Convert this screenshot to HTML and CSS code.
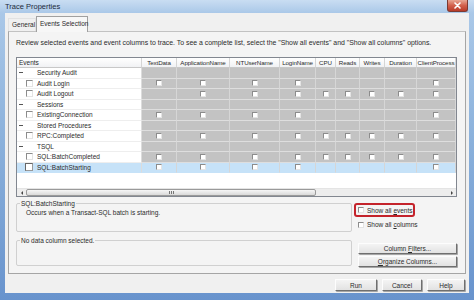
FILE: index.html
```html
<!DOCTYPE html>
<html lang="en">
<head>
  <meta charset="UTF-8" />
  <title>Trace Properties</title>
  <link rel="stylesheet" href="styles.css">
</head>
<body>
  <div class="window">
    <div class="titlebar">
      <span class="title">Trace Properties</span>
      <span class="close">
        <svg width="9" height="7" viewBox="0 0 9 7"><path d="M2 1 L7 6 M7 1 L2 6" stroke="#fff" stroke-width="1.6" stroke-linecap="round"/></svg>
      </span>
    </div>

    <div class="client">
      <div class="tabs">
        <span class="tab">General</span>
        <span class="tab active">Events Selection</span>
      </div>

      <div class="panel">
        <p class="desc">Review selected events and event columns to trace. To see a complete list, select the "Show all events" and "Show all columns" options.</p>

        <div class="grid">
          <div class="row head">
            <span class="ev">Events</span>
            <span class="h">TextData</span>
            <span class="h">ApplicationName</span>
            <span class="h">NTUserName</span>
            <span class="h">LoginName</span>
            <span class="h">CPU</span>
            <span class="h">Reads</span>
            <span class="h">Writes</span>
            <span class="h">Duration</span>
            <span class="h">ClientProcess</span>
          </div>

          <div class="row">
            <span class="ev cat"><span class="minus"></span>Security Audit</span>
            <span class="c"></span><span class="c"></span><span class="c"></span><span class="c"></span><span class="c"></span><span class="c"></span><span class="c"></span><span class="c"></span><span class="c"></span>
          </div>
          <div class="row">
            <span class="ev"><span class="cb"></span>Audit Login</span>
            <span class="c"><i class="cb"></i></span><span class="c"><i class="cb"></i></span><span class="c"><i class="cb"></i></span><span class="c"><i class="cb"></i></span><span class="c"></span><span class="c"></span><span class="c"></span><span class="c"></span><span class="c"><i class="cb"></i></span>
          </div>
          <div class="row">
            <span class="ev"><span class="cb"></span>Audit Logout</span>
            <span class="c"></span><span class="c"><i class="cb"></i></span><span class="c"><i class="cb"></i></span><span class="c"><i class="cb"></i></span><span class="c"><i class="cb"></i></span><span class="c"><i class="cb"></i></span><span class="c"><i class="cb"></i></span><span class="c"><i class="cb"></i></span><span class="c"><i class="cb"></i></span>
          </div>
          <div class="row">
            <span class="ev cat"><span class="minus"></span>Sessions</span>
            <span class="c"></span><span class="c"></span><span class="c"></span><span class="c"></span><span class="c"></span><span class="c"></span><span class="c"></span><span class="c"></span><span class="c"></span>
          </div>
          <div class="row">
            <span class="ev"><span class="cb"></span>ExistingConnection</span>
            <span class="c"><i class="cb"></i></span><span class="c"><i class="cb"></i></span><span class="c"><i class="cb"></i></span><span class="c"><i class="cb"></i></span><span class="c"></span><span class="c"></span><span class="c"></span><span class="c"></span><span class="c"><i class="cb"></i></span>
          </div>
          <div class="row">
            <span class="ev cat"><span class="minus"></span>Stored Procedures</span>
            <span class="c"></span><span class="c"></span><span class="c"></span><span class="c"></span><span class="c"></span><span class="c"></span><span class="c"></span><span class="c"></span><span class="c"></span>
          </div>
          <div class="row">
            <span class="ev"><span class="cb"></span>RPC:Completed</span>
            <span class="c"><i class="cb"></i></span><span class="c"><i class="cb"></i></span><span class="c"><i class="cb"></i></span><span class="c"><i class="cb"></i></span><span class="c"><i class="cb"></i></span><span class="c"><i class="cb"></i></span><span class="c"><i class="cb"></i></span><span class="c"><i class="cb"></i></span><span class="c"><i class="cb"></i></span>
          </div>
          <div class="row">
            <span class="ev cat"><span class="minus"></span>TSQL</span>
            <span class="c"></span><span class="c"></span><span class="c"></span><span class="c"></span><span class="c"></span><span class="c"></span><span class="c"></span><span class="c"></span><span class="c"></span>
          </div>
          <div class="row">
            <span class="ev"><span class="cb"></span>SQL:BatchCompleted</span>
            <span class="c"><i class="cb"></i></span><span class="c"><i class="cb"></i></span><span class="c"><i class="cb"></i></span><span class="c"><i class="cb"></i></span><span class="c"><i class="cb"></i></span><span class="c"><i class="cb"></i></span><span class="c"><i class="cb"></i></span><span class="c"><i class="cb"></i></span><span class="c"><i class="cb"></i></span>
          </div>
          <div class="row sel">
            <span class="ev"><span class="cb big"></span>SQL:BatchStarting</span>
            <span class="c"><i class="cb"></i></span><span class="c"><i class="cb"></i></span><span class="c"><i class="cb"></i></span><span class="c"><i class="cb"></i></span><span class="c"></span><span class="c"></span><span class="c"></span><span class="c"></span><span class="c"><i class="cb"></i></span>
          </div>

          <div class="filler"></div>

          <div class="hscroll">
            <span class="arrow left"></span>
            <div class="track">
              <div class="thumb"><span class="grip"></span></div>
            </div>
            <span class="arrow right"></span>
          </div>
        </div>

        <div class="lower">
          <div class="boxes">
            <fieldset class="group first">
              <legend>SQL:BatchStarting</legend>
              <p>Occurs when a Transact-SQL batch is starting.</p>
            </fieldset>
            <fieldset class="group second">
              <legend>No data column selected.</legend>
            </fieldset>
          </div>

          <div class="side">
            <label class="opt marked"><span class="cb"></span><span>Show all <u>e</u>vents</span></label>
            <label class="opt"><span class="cb"></span><span>Show all <u>c</u>olumns</span></label>
            <button class="wide">Column <u>F</u>ilters...</button>
            <button class="wide"><u>O</u>rganize Columns...</button>
          </div>
        </div>
      </div>

      <div class="footer">
        <button class="run">Run</button>
        <button class="cancel">Cancel</button>
        <button class="help">Help</button>
      </div>
    </div>
  </div>
</body>
</html>
```

FILE: styles.css
```css
body {
  margin: 0;
  font-family: "Liberation Sans", Arial, sans-serif;
  font-size: 6.5px;
  color: #2b2b2b;
}
.window {
  width: 474px;
  height: 300px;
  display: flex;
  flex-direction: column;
  background: linear-gradient(to bottom, #c9ddf2 0, #aac8e8 13px, #8cb2dc 45%, #6893cd 100%);
}
.titlebar {
  height: 13px;
  display: flex;
  align-items: center;
  padding-left: 5px;
}
.title {
  font-size: 7.5px;
  color: #1c2a3c;
}
.close {
  margin-left: auto;
  margin-right: 6px;
  align-self: flex-start;
  width: 21px;
  height: 12px;
  display: flex;
  align-items: center;
  justify-content: center;
  border: 1px solid #7b3a33;
  border-top: none;
  border-radius: 0 0 3px 3px;
  box-sizing: border-box;
  background: linear-gradient(to bottom, #e8a693 0, #d2604c 50%, #b83a28 100%);
}
.client {
  flex: 1;
  margin: 0 5px 7px 5px;
  background: #f0f0f0;
  display: flex;
  flex-direction: column;
}
.tabs {
  height: 18px;
  display: flex;
  align-items: flex-end;
  padding-left: 3px;
}
.tab {
  height: 13px;
  line-height: 12px;
  padding: 0 3px;
  box-sizing: border-box;
  border: 1px solid #e2e2e2;
  border-bottom: none;
  width: 28px;
  white-space: nowrap;
}
.tab.active {
  width: 52px;
  height: 16px;
  line-height: 14px;
  background: #f7f7f7;
  border-color: #a0a0a0;
  margin-bottom: -1px;
  position: relative;
  z-index: 1;
}
.panel {
  width: 458px;
  height: 243px;
  margin-left: 3px;
  box-sizing: border-box;
  border: 1px solid #a5a5a5;
  border-top-color: #c2c2c2;
  background: #f4f4f4;
  padding: 6px 0 0 7px;
}
.desc {
  margin: 0;
  height: 10px;
  line-height: 10px;
  font-size: 6.9px;
  white-space: nowrap;
}
.grid {
  margin-top: 9px;
  width: 441px;
  height: 140px;
  box-sizing: border-box;
  border: 1px solid #828790;
  background: #fff;
  display: flex;
  flex-direction: column;
}
.row {
  display: grid;
  grid-template-columns: 125px 35px 53px 50px 36px 20px 24px 25px 32px 39px;
  height: 10.5px;
}
.row.head {
  height: 10px;
}
.row.head span {
  box-sizing: border-box;
  border-right: 1px solid #d5d5d5;
  border-bottom: 1px solid #c8c8c8;
  background: linear-gradient(to bottom, #ffffff, #f1f2f4);
  line-height: 9px;
  white-space: nowrap;
  overflow: hidden;
}
.row.head .ev {
  padding-left: 2px;
}
.row.head .h {
  text-align: center;
  font-size: 6.2px;
  letter-spacing: -0.1px;
}
.ev {
  display: flex;
  align-items: center;
  box-sizing: border-box;
  padding-left: 9px;
  border-bottom: 1px solid #eeeeee;
  border-right: 1px solid #dcdcdc;
  background: #fff;
  white-space: nowrap;
}
.ev.cat {
  padding-left: 2px;
}
.minus {
  width: 4px;
  height: 1px;
  background: #555;
  margin-right: 14px;
}
.ev .cb {
  width: 7px;
  height: 7px;
  margin-right: 4px;
}
.ev .cb.big {
  width: 8px;
  height: 8px;
  margin-left: -1px;
  margin-right: 4px;
  border-color: #666 #999 #999 #666;
}
.c {
  display: flex;
  align-items: center;
  justify-content: center;
  box-sizing: border-box;
  background: #c3c3c3;
  border-right: 1px solid #d6d6d6;
  border-bottom: 1px solid #dedede;
}
.row.sel .c, .row.sel .ev {
  background: #c6e2f8;
  border-bottom-color: #c6e2f8;
}
.cb {
  display: inline-block;
  flex-shrink: 0;
  width: 6px;
  height: 6px;
  box-sizing: border-box;
  background: #fff;
  border: 1px solid;
  border-color: #8c8c8c #e4e4e4 #e4e4e4 #8c8c8c;
}
.filler {
  flex: 1;
}
.hscroll {
  height: 7px;
  display: flex;
  background: #ededed;
  border-top: 1px solid #e4e4e4;
}
.arrow {
  width: 9px;
  display: flex;
  align-items: center;
  justify-content: center;
}
.arrow::before {
  content: "";
  border-top: 2px solid transparent;
  border-bottom: 2px solid transparent;
}
.arrow.left::before {
  border-right: 2px solid #444;
}
.arrow.right::before {
  border-left: 2px solid #444;
}
.track {
  flex: 1;
}
.thumb {
  width: 290px;
  height: 100%;
  box-sizing: border-box;
  border: 1px solid #9a9a9a;
  border-radius: 2px;
  background: linear-gradient(to bottom, #f6f6f6, #d9d9d9);
  display: flex;
  align-items: center;
  justify-content: center;
}
.grip {
  width: 5px;
  height: 3px;
  background: repeating-linear-gradient(to right, #777 0, #777 1px, transparent 1px, transparent 2px);
}
.lower {
  display: flex;
  gap: 2px;
  margin-top: 3px;
}
.boxes {
  width: 336px;
  display: flex;
  flex-direction: column;
  gap: 5px;
}
.group {
  margin: 0;
  padding: 0 0 0 9px;
  box-sizing: border-box;
  border: 1px solid #d0d0d0;
  border-radius: 2px;
  min-width: 0;
}
.group.first {
  height: 32px;
}
.group.second {
  height: 29px;
}
.group legend {
  padding: 0 1px;
  margin-left: -6px;
  line-height: 7px;
}
.group p {
  margin: 2px 0 0 0;
  line-height: 8px;
}
.side {
  width: 103px;
  display: flex;
  flex-direction: column;
}
.opt {
  display: flex;
  align-items: center;
  gap: 3px;
  height: 7px;
  padding-left: 4px;
  margin-top: 4px;
  white-space: nowrap;
}
.opt.marked {
  width: 61px;
  height: 14px;
  margin-top: 3px;
  box-sizing: border-box;
  padding-left: 2px;
  border: 2px solid #c4232b;
  border-radius: 3px;
}
button {
  font-family: "Liberation Sans", Arial, sans-serif;
  font-size: 6.5px;
  color: #2b2b2b;
  padding: 0;
  box-sizing: border-box;
  border: 1px solid;
  border-color: #fdfdfd #6f6f6f #6f6f6f #fdfdfd;
  border-radius: 1px;
  background: linear-gradient(to bottom, #f4f4f4, #e2e2e2);
  box-shadow: 1px 1px 0 #a6a6a6;
}
.wide {
  width: 99px;
  height: 11px;
  margin-left: 4px;
  margin-bottom: 2px;
}
.side .wide:first-of-type {
  margin-top: 15px;
}
.footer {
  display: flex;
  justify-content: flex-end;
  gap: 5px;
  padding: 5px 4px 0 0;
}
.footer button {
  height: 12px;
}
.run {
  width: 42px;
}
.cancel {
  width: 40px;
}
.help {
  width: 38px;
}
```
